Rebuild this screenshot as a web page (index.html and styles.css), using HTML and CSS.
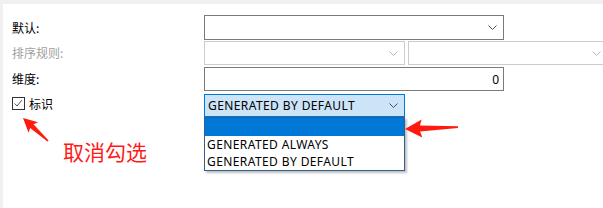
FILE: index.html
```html
<!DOCTYPE html>
<html>
<head>
<meta charset="utf-8">
<link rel="stylesheet" href="styles.css">
</head>
<body>
<div class="frame">
  <div class="form">
    <div class="row r1">
      <span class="label">默认:</span>
      <div class="field select w300"><span class="val"></span><svg class="chev" viewBox="0 0 9 5"><polyline points="0.5,0.5 4.5,4.5 8.5,0.5"/></svg></div>
    </div>
    <div class="row r2">
      <span class="label disabled">排序规则:</span>
      <div class="pair">
        <div class="field select dis w201"><span class="val"></span><svg class="chev" viewBox="0 0 9 5"><polyline points="0.5,0.5 4.5,4.5 8.5,0.5"/></svg></div>
        <div class="field select dis w196"><span class="val"></span><svg class="chev" viewBox="0 0 9 5"><polyline points="0.5,0.5 4.5,4.5 8.5,0.5"/></svg></div>
      </div>
    </div>
    <div class="row r3">
      <span class="label">维度:</span>
      <div class="field input w300"><span class="num">0</span></div>
    </div>
    <div class="row r4">
      <label class="check"><span class="box"><svg viewBox="0 0 13 13"><polyline points="2,6.5 4.8,9.5 10.5,2.5"/></svg></span><span>标识</span></label>
      <div class="combo">
        <div class="field select open w201"><span class="val">GENERATED BY DEFAULT</span><svg class="chev" viewBox="0 0 9 5"><polyline points="0.5,0.5 4.5,4.5 8.5,0.5"/></svg></div>
        <ul class="list">
          <li class="sel">&nbsp;</li>
          <li>GENERATED ALWAYS</li>
          <li>GENERATED BY DEFAULT</li>
        </ul>
      </div>
    </div>
  </div>
  <div class="note">取消勾选</div>
  <svg class="arrow a1" width="70" height="30" viewBox="0 0 70 30"><polygon transform="translate(2,15) rotate(-2)" points="0,0 17,-9 15,-3 53,-0.8 53,0.8 15,3 17,9"/></svg>
  <svg class="arrow a2" width="60" height="60" viewBox="0 0 60 60"><polygon transform="translate(3,3) rotate(42.6)" points="0,0 14,-7 12,-2.5 34,-0.8 34,0.8 12,2.5 14,7"/></svg>
</div>
</body>
</html>
```
FILE: styles.css
```css
html, body {
  margin: 0;
  background: #ffffff;
}
body {
  font-family: "Noto Sans", "Noto Sans CJK SC", sans-serif;
  font-size: 12px;
  color: #000;
  width: 603px;
  height: 208px;
  overflow: hidden;
}
.frame {
  position: relative;
  border-top: 4px solid #f0f0f0;
  border-left: 3px solid #f0f0f0;
  height: 204px;
  overflow: hidden;
}
.form {
  display: flex;
  flex-direction: column;
  padding: 11px 0 0 9px;
}
.row {
  display: grid;
  grid-template-columns: 192px auto;
  align-items: center;
}
.r1 { height: 25px; }
.r2 { height: 24px; margin-top: 1px; }
.r3 { height: 24px; margin-top: 2px; }
.r4 { height: 23px; margin-top: 3px; }
.label {
  font-family: "Noto Sans CJK SC", sans-serif;
  font-size: 12px;
  line-height: 16px;
}
.label.disabled { color: #a0a0a0; }
.field {
  box-sizing: border-box;
  height: 100%;
  border: 1px solid #7a7a7a;
  background: #fff;
  display: flex;
  align-items: center;
  justify-content: space-between;
  padding: 0 6px 0 3px;
}
.w300 { width: 300px; }
.w201 { width: 201px; }
.w196 { width: 200px; }
.pair {
  display: flex;
  gap: 3px;
  height: 24px;
}
.field.dis { border-color: #cccccc; }
.chev {
  width: 9px;
  height: 5px;
  fill: none;
  stroke: #505050;
  stroke-width: 1;
}
.dis .chev { stroke: #b4b4b4; }
.input { justify-content: flex-end; padding-right: 4px; }
.num { font-size: 12px; }
.check {
  display: flex;
  align-items: center;
  gap: 4px;
  font-family: "Noto Sans CJK SC", sans-serif;
  font-size: 12px;
  align-self: start;
  margin-top: 1px;
}
.box {
  width: 13px;
  height: 13px;
  box-sizing: border-box;
  border: 1px solid #333;
  background: #fff;
  display: flex;
}
.box svg {
  width: 11px;
  height: 11px;
  fill: none;
  stroke: #333;
  stroke-width: 1;
}
.combo {
  position: relative;
  height: 23px;
}
.field.open {
  background: #cce4f7;
  border-color: #0078d7;
}
.val {
  white-space: nowrap;
  letter-spacing: 0.4px;
}
.list {
  position: absolute;
  left: 0;
  top: 23px;
  width: 201px;
  box-sizing: border-box;
  margin: 0;
  padding: 0;
  list-style: none;
  background: #fff;
  border: 1px solid #2e5f8e;
  box-shadow: 2px 2px 2px rgba(0,0,0,0.25);
  z-index: 2;
}
.list li {
  height: 17px;
  line-height: 17px;
  padding-left: 2px;
  white-space: nowrap;
  letter-spacing: 0.4px;
}
.list li.sel {
  background: #0078d7;
  height: 18px;
}
.note {
  position: absolute;
  left: 60px;
  top: 132px;
  font-family: "Noto Sans CJK SC", sans-serif;
  font-size: 21px;
  line-height: 30px;
  color: #ff1a1a;
}
.arrow {
  position: absolute;
  fill: #ff1a10;
  z-index: 3;
}
.a1 { left: 400px; top: 110px; }
.a2 { left: 17px; top: 111px; }
```
